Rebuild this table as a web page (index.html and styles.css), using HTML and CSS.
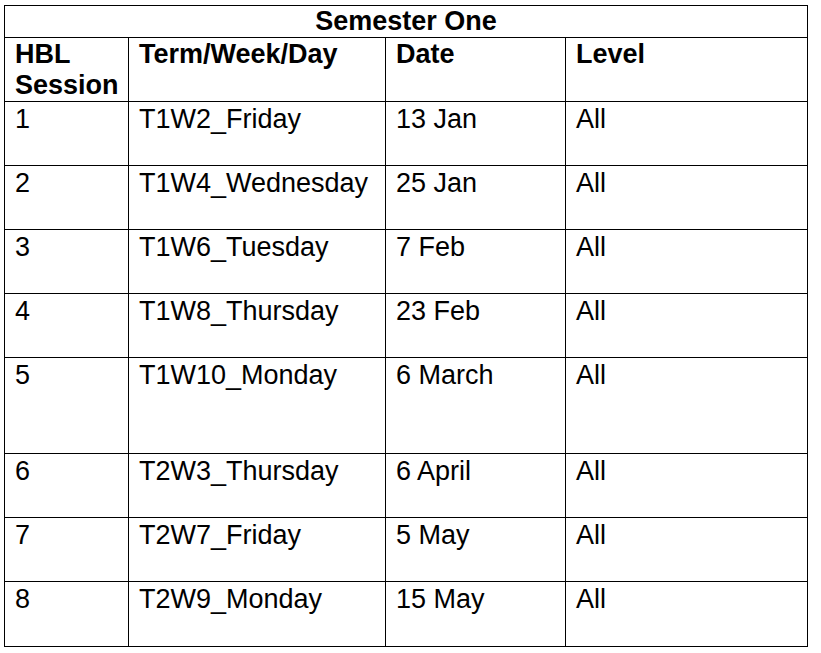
FILE: index.html
```html
<!DOCTYPE html>
<html lang="en">
<head>
<meta charset="utf-8">
<title>Semester One</title>
<link rel="stylesheet" href="styles.css">
</head>
<body>
<table class="schedule">
  <colgroup>
    <col class="c-session">
    <col class="c-term">
    <col class="c-date">
    <col class="c-level">
  </colgroup>
  <thead>
    <tr class="r-title"><th class="title" colspan="4">Semester One</th></tr>
    <tr class="r-head">
      <th>HBL<br>Session</th>
      <th>Term/Week/Day</th>
      <th>Date</th>
      <th>Level</th>
    </tr>
  </thead>
  <tbody>
    <tr class="r-data"><td>1</td><td>T1W2_Friday</td><td>13 Jan</td><td>All</td></tr>
    <tr class="r-data"><td>2</td><td>T1W4_Wednesday</td><td>25 Jan</td><td>All</td></tr>
    <tr class="r-data"><td>3</td><td>T1W6_Tuesday</td><td>7 Feb</td><td>All</td></tr>
    <tr class="r-data"><td>4</td><td>T1W8_Thursday</td><td>23 Feb</td><td>All</td></tr>
    <tr class="r-tall"><td>5</td><td>T1W10_Monday</td><td>6 March</td><td>All</td></tr>
    <tr class="r-data"><td>6</td><td>T2W3_Thursday</td><td>6 April</td><td>All</td></tr>
    <tr class="r-data"><td>7</td><td>T2W7_Friday</td><td>5 May</td><td>All</td></tr>
    <tr class="r-last"><td>8</td><td>T2W9_Monday</td><td>15 May</td><td>All</td></tr>
  </tbody>
</table>
</body>
</html>
```

FILE: styles.css
```css
html, body {
  margin: 0;
  background: #fff;
}

body {
  padding: 5px 0 0 4px;
  font-family: "Liberation Sans", Arial, sans-serif;
  color: #000;
}

.schedule {
  table-layout: fixed;
  width: 803px;
  border-collapse: separate;
  border-spacing: 0;
  border-left: 1px solid #000;
  border-top: 1px solid #000;
  font-size: 27px;
  line-height: 31px;
}

.c-session { width: 124px; }
.c-term { width: 257px; }
.c-date { width: 180px; }
.c-level { width: 242px; }

.schedule th,
.schedule td {
  box-sizing: border-box;
  border-right: 1px solid #000;
  border-bottom: 1px solid #000;
  padding: 2px 4px 0 10px;
  vertical-align: top;
  text-align: left;
  white-space: nowrap;
}

.schedule th {
  font-weight: bold;
  padding-top: 1px;
}

.schedule .title {
  text-align: center;
  padding: 0;
  line-height: 30px;
}

.r-title { height: 32px; }
.r-head { height: 64px; }
.r-data { height: 64px; }
.r-tall { height: 96px; }
.r-last { height: 65px; }
```
